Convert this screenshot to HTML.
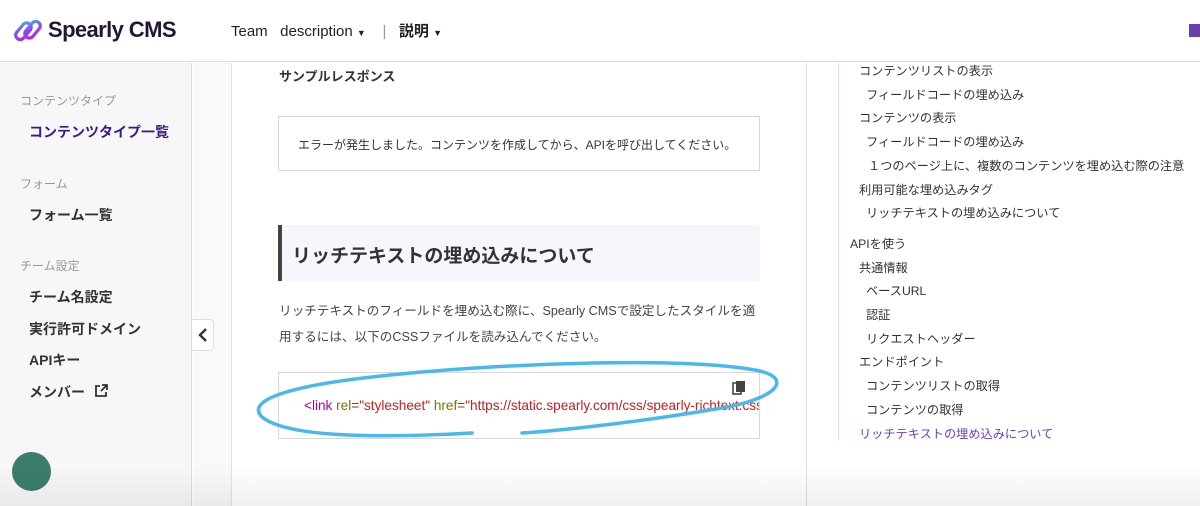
<!DOCTYPE html>
<html><head><meta charset="utf-8"><style>
*{margin:0;padding:0;box-sizing:border-box}
body{width:1200px;height:506px;overflow:hidden;position:relative;background:#fff;font-family:"Liberation Sans","Noto Sans CJK JP",sans-serif;color:#333}
.a{position:absolute;white-space:nowrap}
</style></head><body>
<div class="a" style="left:0;top:0;width:1200px;height:62px;background:#fff;border-bottom:1px solid #ddd"></div>
<svg class="a" style="left:12px;top:14px;overflow:visible" width="34" height="32" viewBox="0 0 34 32">
<defs><linearGradient id="g" x1="0" y1="1" x2="1" y2="0"><stop offset="0" stop-color="#b02ce0"/><stop offset="0.6" stop-color="#8a4ef0"/><stop offset="1" stop-color="#4aa8f0"/></linearGradient></defs>
<g transform="rotate(-50 17 16)" fill="none" stroke="url(#g)" stroke-width="3.2">
<rect x="3" y="8" width="19" height="9" rx="4.5"/>
<rect x="10" y="14" width="19" height="9" rx="4.5"/>
</g>
</svg>
<div class="a" style="left:48px;top:17px;font-size:22px;font-weight:bold;color:#231634;letter-spacing:-0.6px">Spearly CMS</div>
<div class="a" style="left:231px;top:20px;font-size:15px;color:#222;font-weight:500">Team&nbsp;&nbsp; description <span style="font-size:9px">▼</span>&nbsp;&nbsp;&nbsp; <span style="color:#999">|</span>&nbsp;&nbsp; <b>説明</b> <span style="font-size:9px">▼</span></div>
<div class="a" style="left:1189px;top:24px;width:11px;height:13px;background:#6a3fa8"></div>
<div class="a" style="left:0;top:63px;width:192px;height:443px;background:#f7f7f7;border-right:1px solid #ddd"></div>
<div class="a" style="left:193px;top:63px;width:39px;height:443px;background:#f9f9f9;border-right:1px solid #e2e2e2"></div>
<div class="a" style="left:20px;top:92px;font-size:12px;color:#999">コンテンツタイプ</div>
<div class="a" style="left:29px;top:122px;font-size:14px;font-weight:bold;color:#3a1a8a">コンテンツタイプ一覧</div>
<div class="a" style="left:20px;top:175px;font-size:12px;color:#999">フォーム</div>
<div class="a" style="left:29px;top:205px;font-size:14px;font-weight:bold;color:#333">フォーム一覧</div>
<div class="a" style="left:20px;top:257px;font-size:12px;color:#999">チーム設定</div>
<div class="a" style="left:29px;top:287px;font-size:14px;font-weight:bold;color:#333">チーム名設定</div>
<div class="a" style="left:29px;top:319px;font-size:14px;font-weight:bold;color:#333">実行許可ドメイン</div>
<div class="a" style="left:29px;top:350px;font-size:14px;font-weight:bold;color:#333">APIキー</div>
<div class="a" style="left:29px;top:382px;font-size:14px;font-weight:bold;color:#333">メンバー</div>
<svg class="a" style="left:94px;top:384px" width="14" height="14" viewBox="0 0 14 14"><path d="M6 2H2v10h10V8" fill="none" stroke="#333" stroke-width="1.8"/><path d="M7 7l6-6M8 1h5v5" fill="none" stroke="#333" stroke-width="1.8"/></svg>
<div class="a" style="left:12px;top:452px;width:39px;height:39px;border-radius:50%;background:#3a7d6d"></div>
<div class="a" style="left:192px;top:319px;width:22px;height:32px;background:#fff;border:1px solid #ddd;border-left:none;border-radius:0 4px 4px 0"></div>
<svg class="a" style="left:197px;top:327px" width="12" height="16" viewBox="0 0 12 16"><path d="M9 2L3 8l6 6" fill="none" stroke="#333" stroke-width="2.4"/></svg>
<div class="a" style="left:279px;top:66px;font-size:13px;font-weight:bold;color:#333">サンプルレスポンス</div>
<div class="a" style="left:278px;top:116px;width:482px;height:55px;border:1px solid #d8d8d8"></div>
<div class="a" style="left:298px;top:136px;font-size:12px;color:#333">エラーが発生しました。コンテンツを作成してから、APIを呼び出してください。</div>
<div class="a" style="left:278px;top:225px;width:482px;height:56px;background:#f7f6fc;border-left:4px solid #444"></div>
<div class="a" style="left:292px;top:241px;font-size:19px;font-weight:bold;color:#333">リッチテキストの埋め込みについて</div>
<div class="a" style="left:279px;top:298px;font-size:12.6px;color:#444;line-height:26px">リッチテキストのフィールドを埋め込む際に、Spearly CMSで設定したスタイルを適<br>用するには、以下のCSSファイルを読み込んでください。</div>
<div class="a" style="left:278px;top:372px;width:482px;height:67px;border:1px solid #d8d8d8;overflow:hidden">
<div class="a" style="left:25px;top:25px;font-size:13.6px;color:#b22"><span style="color:#a0a">&lt;link</span> <span style="color:#770">rel</span>=<span>"stylesheet"</span> <span style="color:#770">href</span>=<span>"https://static.spearly.com/css/spearly-richtext.css"</span></div>
</div>
<svg class="a" style="left:732px;top:380px" width="14" height="16" viewBox="0 0 14 16"><rect x="1" y="3" width="8" height="11" fill="none" stroke="#444" stroke-width="1.6"/><rect x="4" y="1" width="9" height="11" fill="#444"/></svg>
<svg class="a" style="left:250px;top:355px" width="540" height="95" viewBox="0 0 540 95"><path d="M222 78 C150 82 40 85 12 62 C-5 45 40 30 140 20 C260 8 430 2 505 15 C545 22 530 45 460 55 C400 65 320 75 272 78" fill="none" stroke="#4ab8ec" stroke-width="3.5" stroke-linecap="round"/></svg>
<div class="a" style="left:806px;top:63px;width:394px;height:443px;border-left:1px solid #ddd;background:#fff"></div>
<div class="a" style="left:838px;top:63px;width:1px;height:378px;background:#e2d8f4"></div>
<div class="a" style="left:806px;top:63px;font-size:12.2px;color:#333;line-height:23.7px">
<div style="padding-left:53px;margin-top:-3px">コンテンツリストの表示</div>
<div style="padding-left:60px">フィールドコードの埋め込み</div>
<div style="padding-left:53px">コンテンツの表示</div>
<div style="padding-left:60px">フィールドコードの埋め込み</div>
<div style="padding-left:62px">１つのページ上に、複数のコンテンツを埋め込む際の注意</div>
<div style="padding-left:53px">利用可能な埋め込みタグ</div>
<div style="padding-left:60px">リッチテキストの埋め込みについて</div>
<div style="padding-left:44px;margin-top:7px">APIを使う</div>
<div style="padding-left:53px">共通情報</div>
<div style="padding-left:60px">ベースURL</div>
<div style="padding-left:60px">認証</div>
<div style="padding-left:60px">リクエストヘッダー</div>
<div style="padding-left:53px">エンドポイント</div>
<div style="padding-left:60px">コンテンツリストの取得</div>
<div style="padding-left:60px">コンテンツの取得</div>
<div style="padding-left:53px;color:#6a3fc0">リッチテキストの埋め込みについて</div>
</div>
<div class="a" style="left:0;top:466px;width:1200px;height:40px;background:linear-gradient(rgba(0,0,0,0),rgba(0,0,0,0.06))"></div>
</body></html>
